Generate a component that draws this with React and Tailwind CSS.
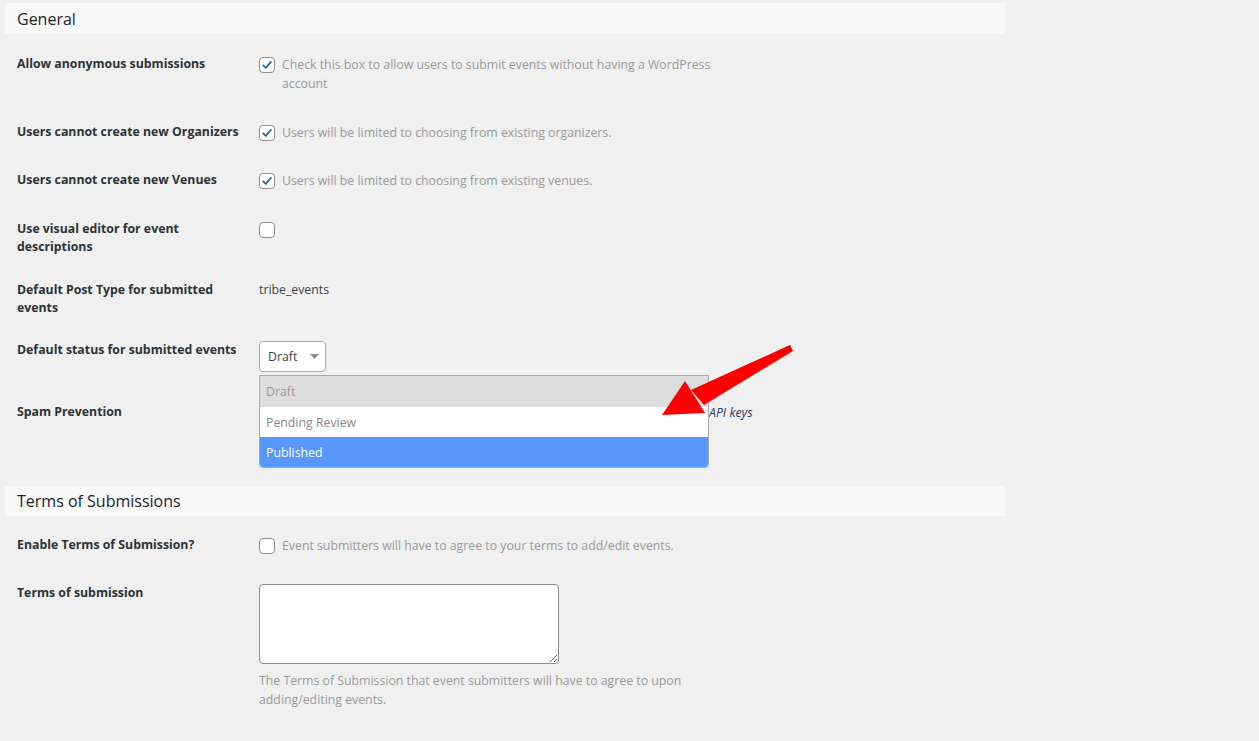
import React from "react";

const font = { fontFamily: '"Open Sans", "Noto Sans", sans-serif' };

function Check({ checked }) {
  return (
    <span className="flex items-center justify-center w-[16px] h-[16px] shrink-0 rounded-[4px] border border-[#8c8f94] bg-white">
      {checked && (
        <svg width="14" height="14" viewBox="0 0 20 20">
          <path d="M4.5 10.5 L8.3 14.2 L15.5 5.5" fill="none" stroke="#2271b1" strokeWidth="2.6" strokeLinecap="round" strokeLinejoin="round" />
        </svg>
      )}
    </span>
  );
}

function Row({ label, children, pt }) {
  return (
    <div className={`flex pl-[17px] text-[12.3px] leading-[19px] ${pt}`}>
      <div className="w-[242px] shrink-0 pr-[10px] leading-[18px] font-bold text-[#2c3338]">{label}</div>
      <div className="flex-1 relative">{children}</div>
    </div>
  );
}

function CheckText({ checked, children }) {
  return (
    <div className="flex items-start gap-[7px] w-[460px]">
      <span className="flex pt-[2px]"><Check checked={checked} /></span>
      <span className="leading-[19px] text-[#9a9a9a]">{children}</span>
    </div>
  );
}

export default function App() {
  return (
    <div className="min-h-[741px] bg-[#f0f0f0] relative pt-[3px]" style={font}>
      <div className="ml-[5px] w-[1000px] h-[31px] bg-[#f9f9f9] flex items-center pl-[12px] text-[16px] text-[#1d2327]">General</div>

      <Row label="Allow anonymous submissions" pt="pt-[21px]">
        <CheckText checked>Check this box to allow users to submit events without having a WordPress account</CheckText>
      </Row>
      <Row label="Users cannot create new Organizers" pt="pt-[30px]">
        <CheckText checked>Users will be limited to choosing from existing organizers.</CheckText>
      </Row>
      <Row label="Users cannot create new Venues" pt="pt-[29px]">
        <CheckText checked>Users will be limited to choosing from existing venues.</CheckText>
      </Row>
      <Row label={<span className="block w-[180px]">Use visual editor for event descriptions</span>} pt="pt-[30px]">
        <CheckText checked={false}></CheckText>
      </Row>
      <Row label={<span className="block w-[205px]">Default Post Type for submitted events</span>} pt="pt-[25px]">
        <div className="leading-[18px] text-[#3c434a]">tribe_events</div>
      </Row>
      <Row label="Default status for submitted events" pt="pt-[24px]">
        <div className="relative">
          <div className="w-[67px] h-[31px] rounded-[4px] border border-[#aaaaaa] bg-white flex items-center justify-between pl-[8px] pr-[6px]">
            <span className="text-[#444]">Draft</span>
            <svg width="9" height="5" viewBox="0 0 9 5"><path d="M0 0 L9 0 L4.5 5 Z" fill="#888" /></svg>
          </div>
          <div className="absolute left-0 top-[34px] z-10 w-[450px] border border-[#aaaaaa] rounded-b-[4px] overflow-hidden bg-white">
            <div className="h-[31px] bg-[#dddddd] text-[#999] flex items-center pl-[6px]">Draft</div>
            <div className="h-[30px] bg-white text-[#888] flex items-center pl-[6px]">Pending Review</div>
            <div className="h-[30px] bg-[#5897fb] text-white flex items-center pl-[6px]">Published</div>
          </div>
        </div>
      </Row>
      <Row label="Spam Prevention" pt="pt-[31px]">
        <div className="italic text-[#2b3a67] whitespace-nowrap pl-[450px]">API keys</div>
      </Row>

      <div className="mt-[64px] ml-[5px] w-[1000px] h-[30px] bg-[#f9f9f9] flex items-center pl-[12px] text-[16px] text-[#1d2327]">Terms of Submissions</div>

      <Row label="Enable Terms of Submission?" pt="pt-[20px]">
        <CheckText checked={false}>Event submitters will have to agree to your terms to add/edit events.</CheckText>
      </Row>
      <Row label="Terms of submission" pt="pt-[29px]">
        <div>
          <textarea className="block w-[300px] h-[80px] rounded-[4px] border border-[#8c8f94] bg-white resize-y" />
          <p className="mt-[7px] w-[440px] text-[#9a9a9a]">The Terms of Submission that event submitters will have to agree to upon adding/editing events.</p>
        </div>
      </Row>

      <svg className="absolute left-0 top-0 pointer-events-none z-20" width="1259" height="741" viewBox="0 0 1259 741">
        <path d="M790 345 L793 351 L704 405 L691 390 Z" fill="#ff0000" />
        <path d="M662 415 L685 381 L705 413 Z" fill="#ff0000" />
      </svg>
    </div>
  );
}
